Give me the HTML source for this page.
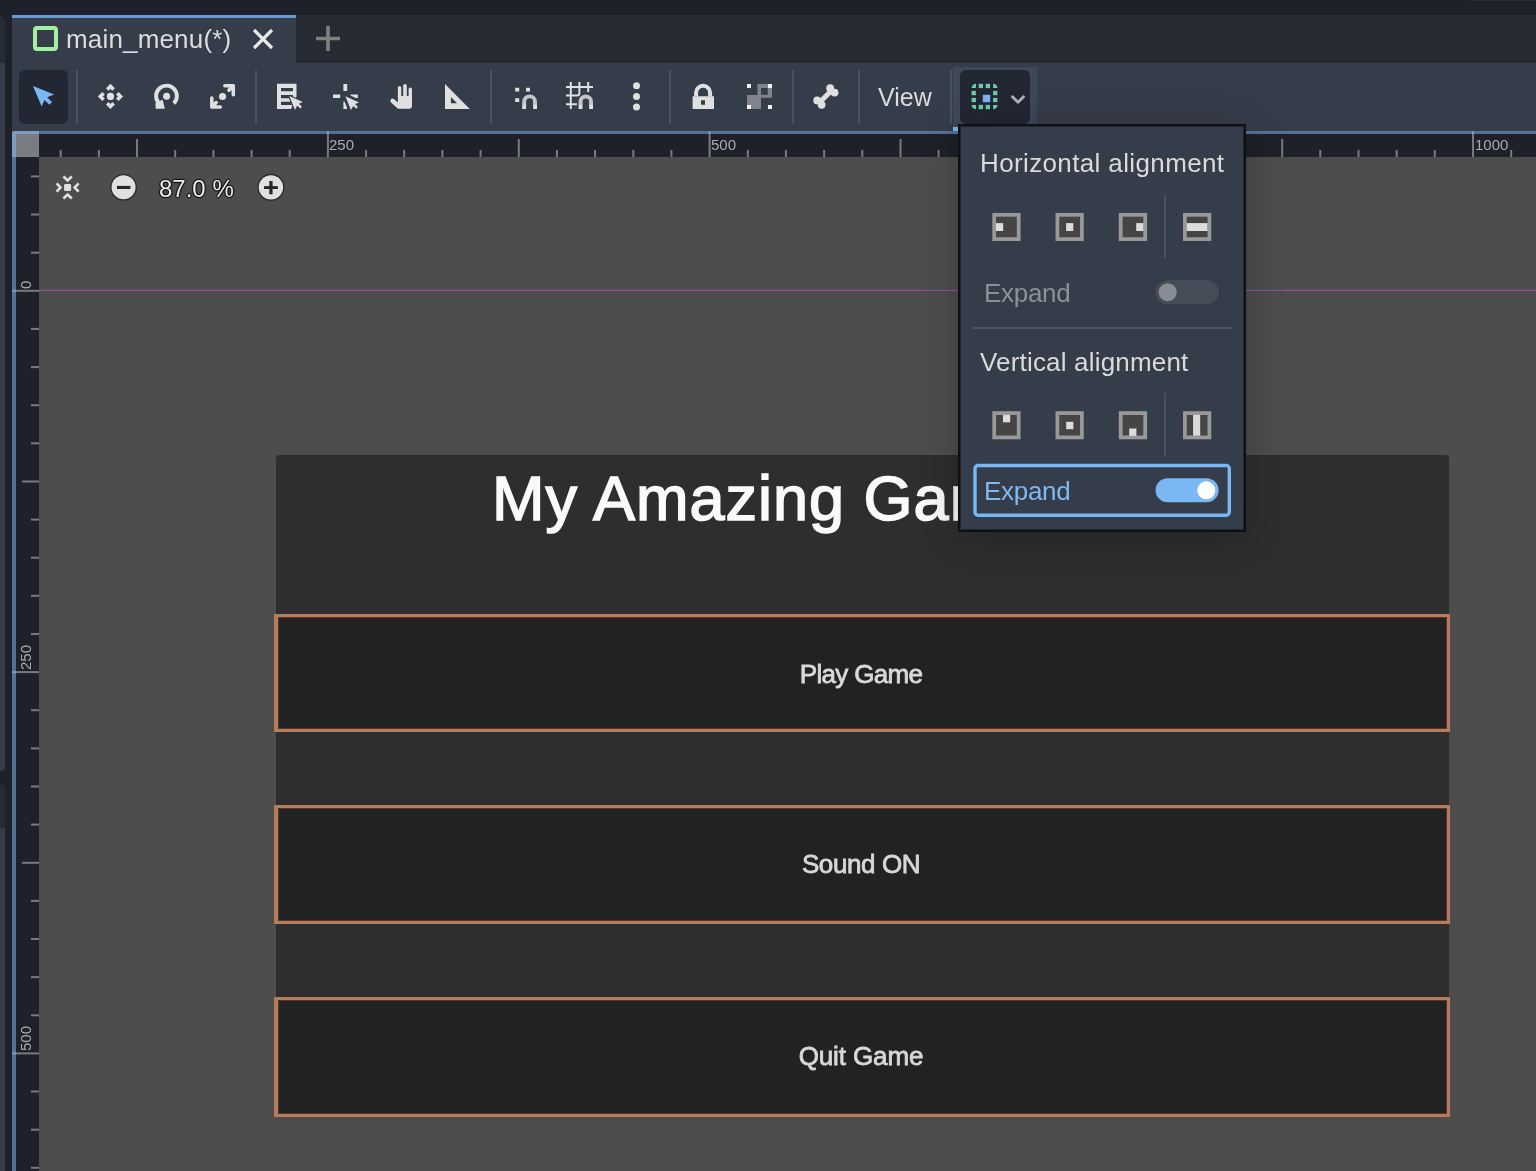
<!DOCTYPE html>
<html><head><meta charset="utf-8">
<style>
*{margin:0;padding:0;box-sizing:border-box}
html,body{width:1536px;height:1171px;overflow:hidden;background:#1e2129;font-family:"Liberation Sans",sans-serif}
.a{position:absolute}
svg{position:absolute;overflow:visible}
.sep{position:absolute;width:2px;background:#4b515c;top:70px;height:54px}
.txt{position:absolute;white-space:nowrap;line-height:1;will-change:transform}
</style></head><body>

<div class="a" style="left:0;top:16px;width:5px;height:47px;background:#262b34;border-top-right-radius:5px"></div>
<div class="a" style="left:0;top:63px;width:5px;height:708px;background:#363d4a;border-bottom-right-radius:4px"></div>
<div class="a" style="left:0;top:785px;width:5px;height:43px;background:#262b34;border-top-right-radius:4px"></div>
<div class="a" style="left:0;top:828px;width:5px;height:343px;background:#363d4a"></div>
<div class="a" style="left:12px;top:15px;width:1524px;height:48px;background:#252a33"></div>
<div class="a" style="left:12px;top:15px;width:284px;height:48px;background:#363d4a;border-top:3px solid #6a9bcf"></div>
<div class="a" style="left:33px;top:26px;width:25px;height:25px;border:4px solid #a5f0a0;border-radius:4px"></div>
<div class="txt" style="left:66px;top:26.1px;font-size:26px;letter-spacing:0.17px;color:#dcdcdc">main_menu(*)</div>
<svg style="left:252px;top:28px" width="22" height="22" viewBox="0 0 22 22"><path d="M2 2L20 20M20 2L2 20" stroke="#e8e8e8" stroke-width="3.2"/></svg>
<svg style="left:316px;top:26px" width="24" height="25" viewBox="0 0 24 25"><path d="M12 0V25M0 12.5H24" stroke="#808080" stroke-width="3.6"/></svg>
<div class="a" style="left:12px;top:63px;width:1524px;height:68px;background:#363d4a"></div>
<div class="a" style="left:19px;top:70px;width:49px;height:54px;background:#222733;border-radius:6px"></div>
<div class="sep" style="left:76px"></div>
<div class="sep" style="left:255px"></div>
<div class="sep" style="left:490px"></div>
<div class="sep" style="left:669px"></div>
<div class="sep" style="left:792px"></div>
<div class="sep" style="left:858px"></div>
<div class="sep" style="left:950px"></div>
<div class="a" style="left:953px;top:67px;width:84px;height:60px;background:#3d4859"></div>
<div class="a" style="left:960px;top:70px;width:70px;height:54px;background:#222733;border-radius:6px"></div>
<div class="txt" style="left:878px;top:84.8px;font-size:25px;color:#dcdcdc">View</div>
<svg style="left:0;top:0" width="1536" height="140"><path d="M33 85.9L54.2 94.5L47.1 97.3L52 102.1L49.4 104.7L44.5 99.9L41.7 106.6Z" fill="#7ab8f5"/><circle cx="110.46" cy="96.4" r="3.6" fill="#e0e0e0"/><path d="M107.26 89.6L110.46 86.4L113.66 89.6M107.26 103.2L110.46 106.4L113.66 103.2M103.6 93.25L100.4 96.45L103.6 99.65M117.3 93.25L120.5 96.45L117.3 99.65" fill="none" stroke="#e0e0e0" stroke-width="3.6"/><circle cx="166.6" cy="96.3" r="3.5" fill="#e0e0e0"/><path d="M158.4 102.6A10.4 10.4 0 1 1 173.8 103.4" fill="none" stroke="#e0e0e0" stroke-width="3.9"/><path d="M155.3 103.4L162.6 99.6L164.8 108.8L155.8 108.8Z" fill="#e0e0e0"/><circle cx="222.55" cy="96.45" r="3.55" fill="#e0e0e0"/><path d="M224.8 85.8H233.3V94.8M233.3 85.8L228.9 90.2M220.3 106.9H211.8V97.9M211.8 106.9L216.2 102.5" fill="none" stroke="#e0e0e0" stroke-width="3.5" stroke-linecap="round" stroke-linejoin="round"/><path d="M277 83.8H296.5V96.3L291 109H277Z" fill="#e0e0e0"/><path d="M281 88H293V91.2H281ZM281 95H293V98.2H281ZM281 101.7H293V104.9H281Z" fill="#363d4a"/><path d="M289.3 96L302.8 102.1L298.8 103.7L301.9 106.8L300.2 108.5L297.2 105.4L295 109.9Z" fill="#e0e0e0" stroke="#363d4a" stroke-width="2.4" stroke-linejoin="round" paint-order="stroke"/><path d="M343.4 83.9H347.2V91H343.4ZM333 94.5H340.2V98.1H333ZM350.6 94.5H357.9V98.1H350.6ZM343.4 101.5H347.2V108.9H343.4Z" fill="#e0e0e0"/><path d="M345.4 96.3L359.1 102.4L355.1 104.1L357.9 107L356.2 108.7L353.3 105.9L350.9 109.9Z" fill="#e0e0e0" stroke="#363d4a" stroke-width="5.5" stroke-linejoin="round" paint-order="stroke"/><rect x="397.9" y="85.9" width="3.4" height="13" rx="1.7" fill="#e0e0e0"/><rect x="403.2" y="84" width="3.6" height="14" rx="1.8" fill="#e0e0e0"/><rect x="408.6" y="87.5" width="3.4" height="12" rx="1.7" fill="#e0e0e0"/><path d="M397.9 96H412V105.7Q412 108.7 409 108.7H398L390.8 102.3A2.3 2.3 0 0 1 393.9 99L397.9 102.4Z" fill="#e0e0e0"/><path d="M445 84V109H469.8ZM450.9 97V103.3H457.1Z" fill="#e0e0e0" fill-rule="evenodd"/><path d="M515.2 87.7h4v3.9h-4zM526 87.7h4v3.9h-4zM515.2 98.2h4v3.9h-4z" fill="#e0e0e0"/><path d="M524.2 105V101.8A5.4 5.4 0 0 1 535 101.8V105" fill="none" stroke="#c4c6cc" stroke-width="3.9"/><path d="M522.2 104.8h3.9v4.2h-3.9zM533.1 104.8h3.9v4.2h-3.9z" fill="#e0e0e0"/><path d="M570.8 82V109M579.4 82V93A2.5 2.5 0 0 1 576.9 95.5H566M588.2 82V92M566 86.9H593M566 104.3H577" fill="none" stroke="#e0e0e0" stroke-width="2"/><path d="M580.55 105V101.7A5.25 5.25 0 0 1 591.05 101.7V105" fill="none" stroke="#c4c6cc" stroke-width="3.9"/><path d="M578.6 104.8h3.9v4.2h-3.9zM589.1 104.8h3.9v4.2h-3.9z" fill="#e0e0e0"/><circle cx="636.5" cy="85.7" r="3.5" fill="#e0e0e0"/><circle cx="636.5" cy="96.4" r="3.5" fill="#e0e0e0"/><circle cx="636.5" cy="107" r="3.5" fill="#e0e0e0"/><path d="M696.1 96.5V92.75A7 7 0 0 1 710.1 92.75V96.5" fill="none" stroke="#e0e0e0" stroke-width="4"/><path d="M692.6 96.3H714V109H692.6ZM701 100.2V104.8H705V100.2Z" fill="#e0e0e0" fill-rule="evenodd"/><path d="M757.5 84H772V97.8H757.5ZM761 88V94.7H767.8V88Z" fill="#808389" fill-rule="evenodd"/><path d="M747 95H761V109H747Z" fill="#808389"/><path d="M747 84h4v4h-4zM768 84h4v4h-4zM747 105h4v4h-4zM768 105h4v4h-4z" fill="#f4f4f4"/><path d="M820 102L831.5 90.5" stroke="#e0e0e0" stroke-width="5"/><circle cx="817.2" cy="100.4" r="3.9" fill="#e0e0e0"/><circle cx="821.6" cy="104.8" r="3.9" fill="#e0e0e0"/><circle cx="830.2" cy="88.2" r="3.9" fill="#e0e0e0"/><circle cx="834.6" cy="92.6" r="3.9" fill="#e0e0e0"/><rect x="978.7" y="83.8" width="4.3" height="4.3" fill="#6ccca6"/><rect x="978.7" y="104.9" width="4.3" height="4.3" fill="#6ccca6"/><rect x="985.7" y="83.8" width="4.3" height="4.3" fill="#6ccca6"/><rect x="985.7" y="104.9" width="4.3" height="4.3" fill="#6ccca6"/><rect x="971.6" y="90.9" width="4.3" height="4.3" fill="#6ccca6"/><rect x="993.1" y="90.9" width="4.3" height="4.3" fill="#6ccca6"/><rect x="971.6" y="97.9" width="4.3" height="4.3" fill="#6ccca6"/><rect x="993.1" y="97.9" width="4.3" height="4.3" fill="#6ccca6"/><path d="M971.6 88.1A4.4 4.4 0 0 1 976 83.7V88.1Z" fill="#6ccca6"/><path d="M997.5 88.1A4.4 4.4 0 0 0 993.1 83.7V88.1Z" fill="#6ccca6"/><path d="M971.6 104.9A4.4 4.4 0 0 0 976 109.3V104.9Z" fill="#6ccca6"/><path d="M997.5 104.9A4.4 4.4 0 0 1 993.1 109.3V104.9Z" fill="#6ccca6"/><rect x="982.8" y="94.8" width="7.4" height="7.4" fill="#7db3f0"/><path d="M1012.5 96.8L1018 102.2L1023.5 96.8" fill="none" stroke="#b0b2b8" stroke-width="2.9" stroke-linecap="round" stroke-linejoin="round"/></svg>
<div class="a" style="left:1470px;top:0;width:66px;height:1px;background:#272b34"></div>
<div class="a" style="left:12px;top:131px;width:1524px;height:1040px;background:#1e2129"></div>
<div class="a" style="left:12px;top:131px;width:27px;height:26px;background:#7b7c81"></div>
<div class="a" style="left:39px;top:157px;width:1497px;height:1014px;background:#4d4d4d"></div>
<div class="a" style="left:39px;top:290px;width:1497px;height:1px;background:#a04e9e"></div>
<svg style="left:0;top:0" width="1536" height="160"><rect x="59.7" y="150" width="2" height="7" fill="#797a80"/><rect x="97.9" y="150" width="2" height="7" fill="#797a80"/><rect x="136.0" y="139" width="2" height="18" fill="#797a80"/><rect x="174.2" y="150" width="2" height="7" fill="#797a80"/><rect x="212.4" y="150" width="2" height="7" fill="#797a80"/><rect x="250.6" y="150" width="2" height="7" fill="#797a80"/><rect x="288.7" y="150" width="2" height="7" fill="#797a80"/><rect x="326.9" y="131" width="2" height="26" fill="#797a80"/><rect x="365.1" y="150" width="2" height="7" fill="#797a80"/><rect x="403.2" y="150" width="2" height="7" fill="#797a80"/><rect x="441.4" y="150" width="2" height="7" fill="#797a80"/><rect x="479.6" y="150" width="2" height="7" fill="#797a80"/><rect x="517.8" y="139" width="2" height="18" fill="#797a80"/><rect x="555.9" y="150" width="2" height="7" fill="#797a80"/><rect x="594.1" y="150" width="2" height="7" fill="#797a80"/><rect x="632.3" y="150" width="2" height="7" fill="#797a80"/><rect x="670.4" y="150" width="2" height="7" fill="#797a80"/><rect x="708.6" y="131" width="2" height="26" fill="#797a80"/><rect x="746.8" y="150" width="2" height="7" fill="#797a80"/><rect x="784.9" y="150" width="2" height="7" fill="#797a80"/><rect x="823.1" y="150" width="2" height="7" fill="#797a80"/><rect x="861.3" y="150" width="2" height="7" fill="#797a80"/><rect x="899.5" y="139" width="2" height="18" fill="#797a80"/><rect x="937.6" y="150" width="2" height="7" fill="#797a80"/><rect x="975.8" y="150" width="2" height="7" fill="#797a80"/><rect x="1014.0" y="150" width="2" height="7" fill="#797a80"/><rect x="1052.1" y="150" width="2" height="7" fill="#797a80"/><rect x="1090.3" y="131" width="2" height="26" fill="#797a80"/><rect x="1128.5" y="150" width="2" height="7" fill="#797a80"/><rect x="1166.6" y="150" width="2" height="7" fill="#797a80"/><rect x="1204.8" y="150" width="2" height="7" fill="#797a80"/><rect x="1243.0" y="150" width="2" height="7" fill="#797a80"/><rect x="1281.2" y="139" width="2" height="18" fill="#797a80"/><rect x="1319.3" y="150" width="2" height="7" fill="#797a80"/><rect x="1357.5" y="150" width="2" height="7" fill="#797a80"/><rect x="1395.7" y="150" width="2" height="7" fill="#797a80"/><rect x="1433.8" y="150" width="2" height="7" fill="#797a80"/><rect x="1472.0" y="131" width="2" height="26" fill="#797a80"/><rect x="1510.2" y="150" width="2" height="7" fill="#797a80"/></svg>
<div class="txt" style="left:329.4px;top:136.5px;font-size:15px;color:#a9aaae">250</div>
<div class="txt" style="left:711.1px;top:136.5px;font-size:15px;color:#a9aaae">500</div>
<div class="txt" style="left:1474.5px;top:136.5px;font-size:15px;color:#a9aaae">1000</div>
<svg style="left:0;top:0" width="40" height="1171"><rect x="31" y="175.4" width="8" height="2" fill="#797a80"/><rect x="31" y="213.5" width="8" height="2" fill="#797a80"/><rect x="31" y="251.7" width="8" height="2" fill="#797a80"/><rect x="12" y="289.8" width="27" height="2" fill="#797a80"/><rect x="31" y="327.9" width="8" height="2" fill="#797a80"/><rect x="31" y="366.1" width="8" height="2" fill="#797a80"/><rect x="31" y="404.2" width="8" height="2" fill="#797a80"/><rect x="31" y="442.3" width="8" height="2" fill="#797a80"/><rect x="22" y="480.5" width="17" height="2" fill="#797a80"/><rect x="31" y="518.6" width="8" height="2" fill="#797a80"/><rect x="31" y="556.7" width="8" height="2" fill="#797a80"/><rect x="31" y="594.8" width="8" height="2" fill="#797a80"/><rect x="31" y="633.0" width="8" height="2" fill="#797a80"/><rect x="12" y="671.1" width="27" height="2" fill="#797a80"/><rect x="31" y="709.2" width="8" height="2" fill="#797a80"/><rect x="31" y="747.4" width="8" height="2" fill="#797a80"/><rect x="31" y="785.5" width="8" height="2" fill="#797a80"/><rect x="31" y="823.6" width="8" height="2" fill="#797a80"/><rect x="22" y="861.8" width="17" height="2" fill="#797a80"/><rect x="31" y="899.9" width="8" height="2" fill="#797a80"/><rect x="31" y="938.0" width="8" height="2" fill="#797a80"/><rect x="31" y="976.1" width="8" height="2" fill="#797a80"/><rect x="31" y="1014.3" width="8" height="2" fill="#797a80"/><rect x="12" y="1052.4" width="27" height="2" fill="#797a80"/><rect x="31" y="1090.5" width="8" height="2" fill="#797a80"/><rect x="31" y="1128.7" width="8" height="2" fill="#797a80"/><rect x="31" y="1166.8" width="8" height="2" fill="#797a80"/></svg>
<div class="txt" style="left:18px;top:288.8px;font-size:15px;color:#a9aaae;transform:rotate(-90deg);transform-origin:0 0">0</div>
<div class="txt" style="left:18px;top:670.1px;font-size:15px;color:#a9aaae;transform:rotate(-90deg);transform-origin:0 0">250</div>
<div class="txt" style="left:18px;top:1051.4px;font-size:15px;color:#a9aaae;transform:rotate(-90deg);transform-origin:0 0">500</div>
<div class="a" style="left:12px;top:131px;width:1524px;height:1040px;border-top:3px solid rgba(130,182,245,0.55);border-left:4px solid rgba(130,182,245,0.55);border-top-left-radius:4px"></div>
<svg style="left:0;top:0" width="300" height="210"><rect x="64.1" y="184.1" width="7" height="6.9" rx="1.2" fill="#e0e0e0"/><path d="M63.4 176.5L67.6 180.5L71.8 176.5M63.4 198.5L67.6 194.5L71.8 198.5M56.6 183.3L60.6 187.5L56.6 191.7M78.6 183.3L74.6 187.5L78.6 191.7" fill="none" stroke="#e0e0e0" stroke-width="2.6"/><circle cx="123.55" cy="187.3" r="13.3" fill="#2a2a2a"/><circle cx="123.55" cy="187.3" r="12" fill="#e0e0e0"/><rect x="117" y="185.9" width="13.4" height="3.1" fill="#262626"/><circle cx="270.95" cy="187.35" r="13.5" fill="#2a2a2a"/><circle cx="270.95" cy="187.35" r="12.2" fill="#e0e0e0"/><rect x="264" y="186.1" width="13.9" height="2.9" fill="#262626"/><rect x="269.3" y="181" width="3.3" height="13.3" fill="#262626"/></svg>
<div class="txt" style="left:159px;top:176.9px;font-size:24px;color:#ececec;text-shadow:0 0 1.5px #111,0 0 1.5px #111,1px 0 1px #111,-1px 0 1px #111,0 1px 1px #111,0 -1px 1px #111">87.0 %</div>
<div class="a" style="left:276.3px;top:455.2px;width:1172.3px;height:661px;background:#2e2e2e;border-radius:4px 4px 0 0"></div>
<div class="txt" style="left:492px;top:467.3px;font-size:63px;letter-spacing:1px;-webkit-text-stroke:1.6px #fafafa;color:#fafafa">My Amazing Game</div>
<div class="a" style="left:274px;top:614px;width:1176px;height:118px;background:#222222;border:3px solid #b97c5b;border-left-width:4px;box-shadow:inset 0 0 0 1px rgba(140,95,72,0.4);border-radius:1px"></div>
<div class="txt" style="left:272.5px;width:1176px;text-align:center;top:660.5px;font-size:26px;letter-spacing:-0.7px;-webkit-text-stroke:0.8px #d8d8d8;color:#d8d8d8">Play Game</div>
<div class="a" style="left:274px;top:805px;width:1176px;height:119px;background:#222222;border:3px solid #b97c5b;border-left-width:4px;box-shadow:inset 0 0 0 1px rgba(140,95,72,0.4);border-radius:1px"></div>
<div class="txt" style="left:272.5px;width:1176px;text-align:center;top:851px;font-size:26px;letter-spacing:-0.4px;-webkit-text-stroke:0.8px #d8d8d8;color:#d8d8d8">Sound ON</div>
<div class="a" style="left:274px;top:997px;width:1176px;height:120px;background:#222222;border:3px solid #b97c5b;border-left-width:4px;box-shadow:inset 0 0 0 1px rgba(140,95,72,0.4);border-radius:1px"></div>
<div class="txt" style="left:272.5px;width:1176px;text-align:center;top:1043.4px;font-size:26px;letter-spacing:-0.12px;-webkit-text-stroke:0.8px #d8d8d8;color:#d8d8d8">Quit Game</div>
<div class="a" style="left:953px;top:127px;width:5px;height:4px;background:#7ab3ec"></div>
<div class="a" style="left:958px;top:124px;width:288px;height:408px;background:#363d4a;border:2px solid #0f1013;box-shadow:inset 0 0 0 1px #22262e,0 5px 36px rgba(0,0,0,0.24)"></div>
<div class="txt" style="left:979.5px;top:150.4px;font-size:26px;letter-spacing:0.37px;color:#dadada">Horizontal alignment</div>
<div class="txt" style="left:980.2px;top:349.2px;font-size:26px;letter-spacing:0.18px;color:#dadada">Vertical alignment</div>
<div class="a" style="left:972px;top:327px;width:260px;height:2px;background:#4a505c"></div>
<div class="a" style="left:1164px;top:195px;width:2px;height:63px;background:#4a505c"></div>
<div class="a" style="left:1164px;top:393px;width:2px;height:63px;background:#4a505c"></div>
<svg style="left:0;top:0" width="1536" height="600"><rect x="994.20" y="214.80" width="24.5" height="24.3" fill="#454545" stroke="#999999" stroke-width="3.75"/><rect x="996.00" y="223.10" width="7.2" height="7.9" fill="#dcdcdc"/><rect x="1057.40" y="214.80" width="24.5" height="24.3" fill="#454545" stroke="#999999" stroke-width="3.75"/><rect x="1066.10" y="223.10" width="7.2" height="7.9" fill="#dcdcdc"/><rect x="1120.70" y="214.80" width="24.5" height="24.3" fill="#454545" stroke="#999999" stroke-width="3.75"/><rect x="1136.20" y="223.10" width="7.2" height="7.9" fill="#dcdcdc"/><rect x="1184.90" y="214.80" width="24.5" height="24.3" fill="#454545" stroke="#999999" stroke-width="3.75"/><rect x="1186.70" y="223.10" width="20.8" height="7.9" fill="#dcdcdc"/><rect x="994.20" y="413.10" width="24.5" height="24.3" fill="#454545" stroke="#999999" stroke-width="3.75"/><rect x="1003.00" y="414.90" width="7.2" height="7.4" fill="#dcdcdc"/><rect x="1057.40" y="413.10" width="24.5" height="24.3" fill="#454545" stroke="#999999" stroke-width="3.75"/><rect x="1066.20" y="421.80" width="7.2" height="7.4" fill="#dcdcdc"/><rect x="1120.70" y="413.10" width="24.5" height="24.3" fill="#454545" stroke="#999999" stroke-width="3.75"/><rect x="1129.20" y="428.50" width="7.2" height="7.4" fill="#dcdcdc"/><rect x="1184.90" y="413.10" width="24.5" height="24.3" fill="#454545" stroke="#999999" stroke-width="3.75"/><rect x="1193.10" y="414.90" width="7.1" height="20.8" fill="#dcdcdc"/><rect x="1155.6" y="280.2" width="63" height="24" rx="12" fill="#474d58"/><circle cx="1167.7" cy="292.2" r="9" fill="#898c92"/><rect x="975" y="465.5" width="254.3" height="49.7" rx="3" fill="none" stroke="#7ab8f5" stroke-width="3.4"/><rect x="1155.6" y="478.3" width="63" height="24" rx="12" fill="#7ab8f5"/><circle cx="1206.3" cy="490.3" r="9" fill="#ffffff"/></svg>
<div class="txt" style="left:983.6px;top:279.7px;font-size:26px;letter-spacing:-0.3px;color:#8c9098">Expand</div>
<div class="txt" style="left:983.6px;top:477.6px;font-size:26px;letter-spacing:-0.3px;color:#80b8f2">Expand</div>
</body></html>
